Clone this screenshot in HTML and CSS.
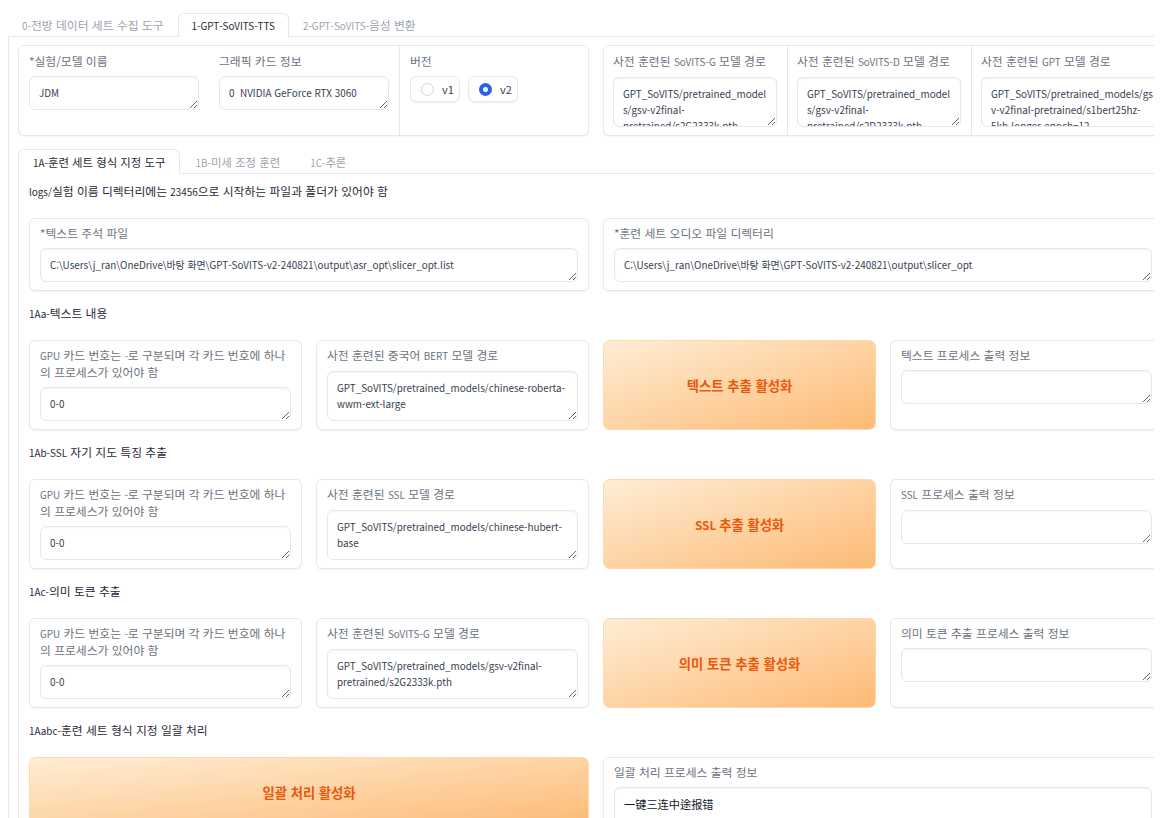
FILE: index.html
```html
<!DOCTYPE html>
<html lang="ko">
<head>
<meta charset="utf-8">
<title>GPT-SoVITS WebUI</title>
<link rel="stylesheet" href="styles.css">
</head>
<body>
<div class="app">
  <div class="tab-nav">
    <button class="tab"><span class="l">0-</span>전방 데이터 세트 수집 도구</button>
    <button class="tab active"><span class="l">1-GPT-SoVITS-TTS</span></button>
    <button class="tab"><span class="l">2-GPT-SoVITS-</span>음성 변환</button>
  </div>
  <div class="panel">
    <div class="top-row">
      <div class="group g-left">
        <div class="gcol">
          <span class="lbl">*실험/모델 이름</span>
          <textarea class="ta" spellcheck="false">JDM</textarea>
        </div>
        <div class="gcol">
          <span class="lbl">그래픽 카드 정보</span>
          <textarea class="ta" spellcheck="false">0  NVIDIA GeForce RTX 3060</textarea>
        </div>
        <div class="gcol div">
          <span class="lbl">버전</span>
          <div class="radios">
            <label class="radio"><span class="dot"></span><span class="l">v1</span></label>
            <label class="radio"><span class="dot on"></span><span class="l">v2</span></label>
          </div>
        </div>
      </div>
      <div class="group g-right">
        <div class="gcol">
          <span class="lbl">사전 훈련된 <span class="l">SoVITS-G</span> 모델 경로</span>
          <textarea class="ta ta2" spellcheck="false">GPT_SoVITS/pretrained_models/gsv-v2final-pretrained/s2G2333k.pth</textarea>
        </div>
        <div class="gcol div">
          <span class="lbl">사전 훈련된 <span class="l">SoVITS-D</span> 모델 경로</span>
          <textarea class="ta ta2" spellcheck="false">GPT_SoVITS/pretrained_models/gsv-v2final-pretrained/s2D2333k.pth</textarea>
        </div>
        <div class="gcol div">
          <span class="lbl">사전 훈련된 <span class="l">GPT</span> 모델 경로</span>
          <textarea class="ta ta2" spellcheck="false">GPT_SoVITS/pretrained_models/gsv-v2final-pretrained/s1bert25hz-5kh-longer-epoch=12-step=369668.ckpt</textarea>
        </div>
      </div>
    </div>

    <div class="sub">
      <div class="tab-nav sub-nav">
        <button class="tab active"><span class="l">1A-</span>훈련 세트 형식 지정 도구</button>
        <button class="tab"><span class="l">1B-</span>미세 조정 훈련</button>
        <button class="tab"><span class="l">1C-</span>추론</button>
      </div>
      <div class="sub-panel">
        <div class="md"><span class="l">logs/</span>실험 이름 디렉터리에는 <span class="l">23456</span>으로 시작하는 파일과 폴더가 있어야 함</div>
        <div class="row2">
          <div class="card">
            <span class="lbl">*텍스트 주석 파일</span>
            <textarea class="ta" spellcheck="false">C:\Users\j_ran\OneDrive\바탕 화면\GPT-SoVITS-v2-240821\output\asr_opt\slicer_opt.list</textarea>
          </div>
          <div class="card">
            <span class="lbl">*훈련 세트 오디오 파일 디렉터리</span>
            <textarea class="ta" spellcheck="false">C:\Users\j_ran\OneDrive\바탕 화면\GPT-SoVITS-v2-240821\output\slicer_opt</textarea>
          </div>
        </div>

        <div class="md"><span class="l">1Aa-</span>텍스트 내용</div>
        <div class="row4">
          <div class="card">
            <span class="lbl nw"><span class="l">GPU</span> 카드 번호는 <span class="l">-</span>로 구분되며 각 카드 번호에 하나<br>의 프로세스가 있어야 함</span>
            <textarea class="ta" spellcheck="false">0-0</textarea>
          </div>
          <div class="card">
            <span class="lbl">사전 훈련된 중국어 <span class="l">BERT</span> 모델 경로</span>
            <textarea class="ta ta2" spellcheck="false">GPT_SoVITS/pretrained_models/chinese-roberta-wwm-ext-large</textarea>
          </div>
          <button class="btn">텍스트 추출 활성화</button>
          <div class="card">
            <span class="lbl">텍스트 프로세스 출력 정보</span>
            <textarea class="ta" spellcheck="false"></textarea>
          </div>
        </div>

        <div class="md"><span class="l">1Ab-SSL</span> 자기 지도 특징 추출</div>
        <div class="row4">
          <div class="card">
            <span class="lbl nw"><span class="l">GPU</span> 카드 번호는 <span class="l">-</span>로 구분되며 각 카드 번호에 하나<br>의 프로세스가 있어야 함</span>
            <textarea class="ta" spellcheck="false">0-0</textarea>
          </div>
          <div class="card">
            <span class="lbl">사전 훈련된 <span class="l">SSL</span> 모델 경로</span>
            <textarea class="ta ta2" spellcheck="false">GPT_SoVITS/pretrained_models/chinese-hubert-base</textarea>
          </div>
          <button class="btn"><span class="lb">SSL</span> 추출 활성화</button>
          <div class="card">
            <span class="lbl"><span class="l">SSL</span> 프로세스 출력 정보</span>
            <textarea class="ta" spellcheck="false"></textarea>
          </div>
        </div>

        <div class="md"><span class="l">1Ac-</span>의미 토큰 추출</div>
        <div class="row4">
          <div class="card">
            <span class="lbl nw"><span class="l">GPU</span> 카드 번호는 <span class="l">-</span>로 구분되며 각 카드 번호에 하나<br>의 프로세스가 있어야 함</span>
            <textarea class="ta" spellcheck="false">0-0</textarea>
          </div>
          <div class="card">
            <span class="lbl">사전 훈련된 <span class="l">SoVITS-G</span> 모델 경로</span>
            <textarea class="ta ta2" spellcheck="false">GPT_SoVITS/pretrained_models/gsv-v2final-pretrained/s2G2333k.pth</textarea>
          </div>
          <button class="btn">의미 토큰 추출 활성화</button>
          <div class="card">
            <span class="lbl">의미 토큰 추출 프로세스 출력 정보</span>
            <textarea class="ta" spellcheck="false"></textarea>
          </div>
        </div>

        <div class="md"><span class="l">1Aabc-</span>훈련 세트 형식 지정 일괄 처리</div>
        <div class="row2 last">
          <button class="btn tall">일괄 처리 활성화</button>
          <div class="card">
            <span class="lbl">일괄 처리 프로세스 출력 정보</span>
            <textarea class="ta ta2 zh" spellcheck="false">一键三连中途报错</textarea>
          </div>
        </div>
      </div>
    </div>
  </div>
</div>
</body>
</html>
```

FILE: styles.css
```css
html {
  overflow: hidden;
  background: #ffffff;
}

body {
  margin: 8px;
  font-family: "Noto Sans CJK KR", "Noto Sans", sans-serif;
  font-size: 11.8px;
  color: #1f2937;
}

.l {
  font-size: 9.9px;
}

.lb {
  font-size: 11.8px;
  margin-right: 3px;
}

.app {
  width: 1176px;
  padding-top: 5px;
}

/* tabs */
.tab-nav {
  display: flex;
  gap: 0;
  margin-bottom: -1px;
}

.tab {
  height: 24px;
  padding: 0 13px;
  font-family: inherit;
  font-size: 11.8px;
  line-height: 22px;
  color: #9ca3af;
  background: none;
  border: 1px solid transparent;
  border-bottom: none;
  border-radius: 6px 6px 0 0;
  cursor: pointer;
}

.tab.active {
  color: #1f2937;
  background: #ffffff;
  border-color: #e5e7eb;
  position: relative;
  z-index: 1;
}

.sub-nav .tab {
  height: 25px;
  padding: 0 14px;
  font-size: 11.4px;
  line-height: 24px;
}

.panel {
  border: 1px solid #e5e7eb;
  border-radius: 0 0 6px 6px;
  padding: 8px 9px;
}

/* top row */
.top-row {
  display: grid;
  grid-template-columns: 571px 571px;
  gap: 14px;
}

.group {
  display: grid;
  border: 1px solid #e5e7eb;
  border-radius: 6px;
  background: #ffffff;
  box-shadow: 0 1px 2px rgba(0, 0, 0, 0.05);
}

.g-left {
  grid-template-columns: 190px 190px 1fr;
}

.g-right {
  grid-template-columns: 183px 184px 1fr;
}

.gcol {
  padding: 7px 10px 8px;
  min-width: 0;
}

.g-right .gcol {
  padding-left: 9px;
}

.gcol.div {
  border-left: 1px solid #e5e7eb;
}

.lbl {
  display: block;
  color: #6b7280;
  line-height: 16px;
  margin-bottom: 7px;
}

.lbl.nw {
  white-space: nowrap;
}

.ta {
  display: block;
  width: 100%;
  box-sizing: border-box;
  height: 34px;
  margin: 0;
  padding: 8px 7px 8px 9px;
  border: 1px solid #e5e7eb;
  border-radius: 6px;
  font-family: inherit;
  font-size: 9.9px;
  line-height: 16px;
  color: #374151;
  background: #ffffff;
  box-shadow: inset 0 1px 2px rgba(0, 0, 0, 0.04);
  resize: vertical;
  overflow: hidden;
  outline: none;
}

.ta2 {
  height: 50px;
}

.zh {
  font-family: "Noto Sans CJK SC", sans-serif;
  font-size: 11.2px;
  color: #111827;
}

/* radios */
.radios {
  display: flex;
  gap: 8px;
}

.radio {
  display: flex;
  align-items: center;
  gap: 8px;
  width: 50px;
  height: 26px;
  box-sizing: border-box;
  padding: 0 10px;
  border: 1px solid #e5e7eb;
  border-radius: 6px;
  background: #ffffff;
  box-shadow: 0 1px 2px rgba(0, 0, 0, 0.05);
  color: #374151;
  line-height: 16px;
}

.radio .l {
  font-size: 11px;
}

.dot {
  flex: none;
  width: 13px;
  height: 13px;
  box-sizing: border-box;
  border-radius: 50%;
  border: 1px solid #d1d5db;
  background: #ffffff;
}

.dot.on {
  border: 4px solid #2563eb;
}

/* sub tabs */
.sub {
  margin-top: 13px;
}

.sub-panel {
  display: flex;
  flex-direction: column;
  gap: 14px;
  border: 1px solid #e5e7eb;
  padding: 9px 10px 14px;
}

.md {
  line-height: 16px;
  height: 21px;
  color: #1f2937;
}

.row2 {
  display: grid;
  grid-template-columns: 1fr 1fr;
  gap: 14px;
}

.row4 {
  display: grid;
  grid-template-columns: repeat(4, 1fr);
  gap: 14px;
}

.row2.last {
  align-items: start;
}

.card {
  min-width: 0;
  border: 1px solid #e5e7eb;
  border-radius: 6px;
  padding: 6px 10px 8px;
  background: #ffffff;
  box-shadow: 0 1px 2px rgba(0, 0, 0, 0.05);
}

.btn {
  display: flex;
  align-items: center;
  justify-content: center;
  border: 1px solid #fed7aa;
  border-radius: 7px;
  background: linear-gradient(to bottom right, #ffedd5, #fdba74);
  color: #ea580c;
  font-family: inherit;
  font-size: 13.3px;
  font-weight: 600;
  cursor: pointer;
}

.btn.tall {
  height: 70px;
}
```
